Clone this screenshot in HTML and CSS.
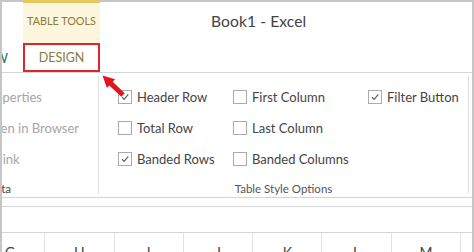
FILE: index.html
```html
<!DOCTYPE html>
<html lang="en">
<head>
    <meta charset="UTF-8">
    <title>Book1 - Excel</title>
    <link rel="stylesheet" href="styles.css">
</head>
<body>
    <div class="window">
        <div class="titlebar">
            <div class="tab-prev"><span>VIEW</span></div>
            <div class="context">
                <div class="context-head">TABLE TOOLS</div>
                <div class="tab-design">DESIGN</div>
            </div>
            <div class="title-area"><span class="title">Book1 - Excel</span></div>
        </div>

        <div class="ribbon">
            <div class="group group-ext">
                <div class="ext-inner">
                    <div class="row ext-item">Properties</div>
                    <div class="row ext-item">Open in Browser</div>
                    <div class="row ext-item">Unlink</div>
                    <div class="group-label ext-label"><span>External Table Data</span></div>
                </div>
            </div>
            <div class="group group-tso">
                <div class="options">
                    <div class="row opt"><span class="box checked"><svg viewBox="0 0 14 14"><path d="M3.5 7.2 L6 9.8 L10.8 4"/></svg></span>Header Row</div>
                    <div class="row opt"><span class="box"></span>First Column</div>
                    <div class="row opt"><span class="box checked"><svg viewBox="0 0 14 14"><path d="M3.5 7.2 L6 9.8 L10.8 4"/></svg></span>Filter Button</div>
                    <div class="row opt"><span class="box"></span>Total Row</div>
                    <div class="row opt"><span class="box"></span>Last Column</div>
                    <div class="row"></div>
                    <div class="row opt"><span class="box checked"><svg viewBox="0 0 14 14"><path d="M3.5 7.2 L6 9.8 L10.8 4"/></svg></span>Banded Rows</div>
                    <div class="row opt"><span class="box"></span>Banded Columns</div>
                    <div class="row"></div>
                </div>
                <div class="group-label tso-label">Table Style Options</div>
            </div>
        </div>

        <div class="ribbon-gap"></div>
        <div class="formula-bar"></div>

        <div class="col-headers">
            <div class="col">G</div>
            <div class="col">H</div>
            <div class="col">I</div>
            <div class="col">J</div>
            <div class="col">K</div>
            <div class="col">L</div>
            <div class="col">M</div>
        </div>

        <!-- flecha roja que señala la pestaña -->
        <svg class="arrow" viewBox="98 70 30 30" width="30" height="30">
            <polygon points="102.5,75.5 115.1,79.3 112.7,81.8 124.7,93.2 121.3,96.8 109.3,85.4 106.9,88"/>
        </svg>
    </div>
</body>
</html>
```

FILE: styles.css
```css
body {
    margin: 0;
    background: #fff;
    font-family: 'Lato', 'Liberation Sans', sans-serif;
    color: #444;
}
.window {
    position: relative;
    width: 474px;
    height: 252px;
    box-sizing: border-box;
    border-left: 2px solid #c6c6c6;
    border-right: 2px solid #c6c6c6;
    overflow: hidden;
    background: #fff;
}

/* barra de titulo y pestañas */
.titlebar {
    display: flex;
    height: 72px;
}
.tab-prev {
    width: 21px;
    border-top: 2px solid #c6c6c6;
    overflow: hidden;
    display: flex;
    justify-content: flex-end;
    padding-right: 15px;
    padding-top: 48px;
    box-sizing: border-box;
    font-size: 13px;
    color: #217346;
    white-space: nowrap;
}
.context {
    width: 77px;
    border-top: 3px solid #e3c95f;
    display: flex;
    flex-direction: column;
}
.context-head {
    height: 40px;
    background: #fcf6dc;
    color: #8a7b3c;
    font-size: 10.8px;
    text-align: center;
    line-height: 36px;
}
.tab-design {
    flex: 1;
    border: 2px solid #e0262c;
    color: #8a7b3c;
    font-size: 12.5px;
    text-align: center;
    line-height: 25px;
}
.title-area {
    flex: 1;
    border-top: 2px solid #c6c6c6;
    padding-left: 111px;
    padding-top: 10px;
    font-size: 15.6px;
    letter-spacing: 0.1px;
    color: #444;
}

/* cinta */
.ribbon {
    display: flex;
    height: 126px;
    box-sizing: border-box;
    border-top: 1px solid #d5d5d5;
    border-bottom: 1px solid #d5d5d5;
}
.group {
    margin: 3px 0;
    padding-top: 5px;
    border-right: 1px solid #e1e1e1;
    box-sizing: border-box;
}
.row {
    height: 31px;
    display: flex;
    align-items: center;
    white-space: nowrap;
    font-size: 13px;
}
.group-label {
    margin-top: 7px;
    line-height: 16px;
    font-size: 11.5px;
    color: #555;
    text-align: center;
}
.group-ext {
    width: 97px;
    overflow: hidden;
}
.ext-inner {
    margin-left: -19px;
}
.ext-item {
    color: #a6a6a6;
}
.ext-label {
    display: flex;
    justify-content: flex-end;
    width: 28px;
    white-space: nowrap;
    color: #444;
}
.group-tso {
    width: 370px;
    padding-left: 19px;
}
.tso-label {
    margin-left: -19px;
}
.options {
    display: grid;
    grid-template-columns: 115px 135px auto;
}
.opt {
    gap: 5px;
    color: #444;
}
.box {
    width: 14px;
    height: 14px;
    box-sizing: border-box;
    border: 1px solid #ababab;
    background: #fff;
}
.box svg {
    display: block;
    width: 12px;
    height: 12px;
}
.box path {
    fill: none;
    stroke: #555;
    stroke-width: 1.2;
}

/* barra de formulas y encabezados */
.ribbon-gap {
    height: 8px;
}
.formula-bar {
    height: 25px;
    border-top: 1px solid #d5d5d5;
    border-bottom: 1px solid #d5d5d5;
}
.col-headers {
    display: flex;
    margin-left: -26px;
}
.col {
    flex: none;
    width: 69.3px;
    height: 24px;
    box-sizing: border-box;
    border-right: 1px solid #e2e2e2;
    padding-top: 11px;
    line-height: 16px;
    font-size: 14px;
    text-align: center;
    color: #444;
}

.arrow {
    position: absolute;
    left: 96px;
    top: 70px;
}
.arrow polygon {
    fill: #e3141c;
}
```
